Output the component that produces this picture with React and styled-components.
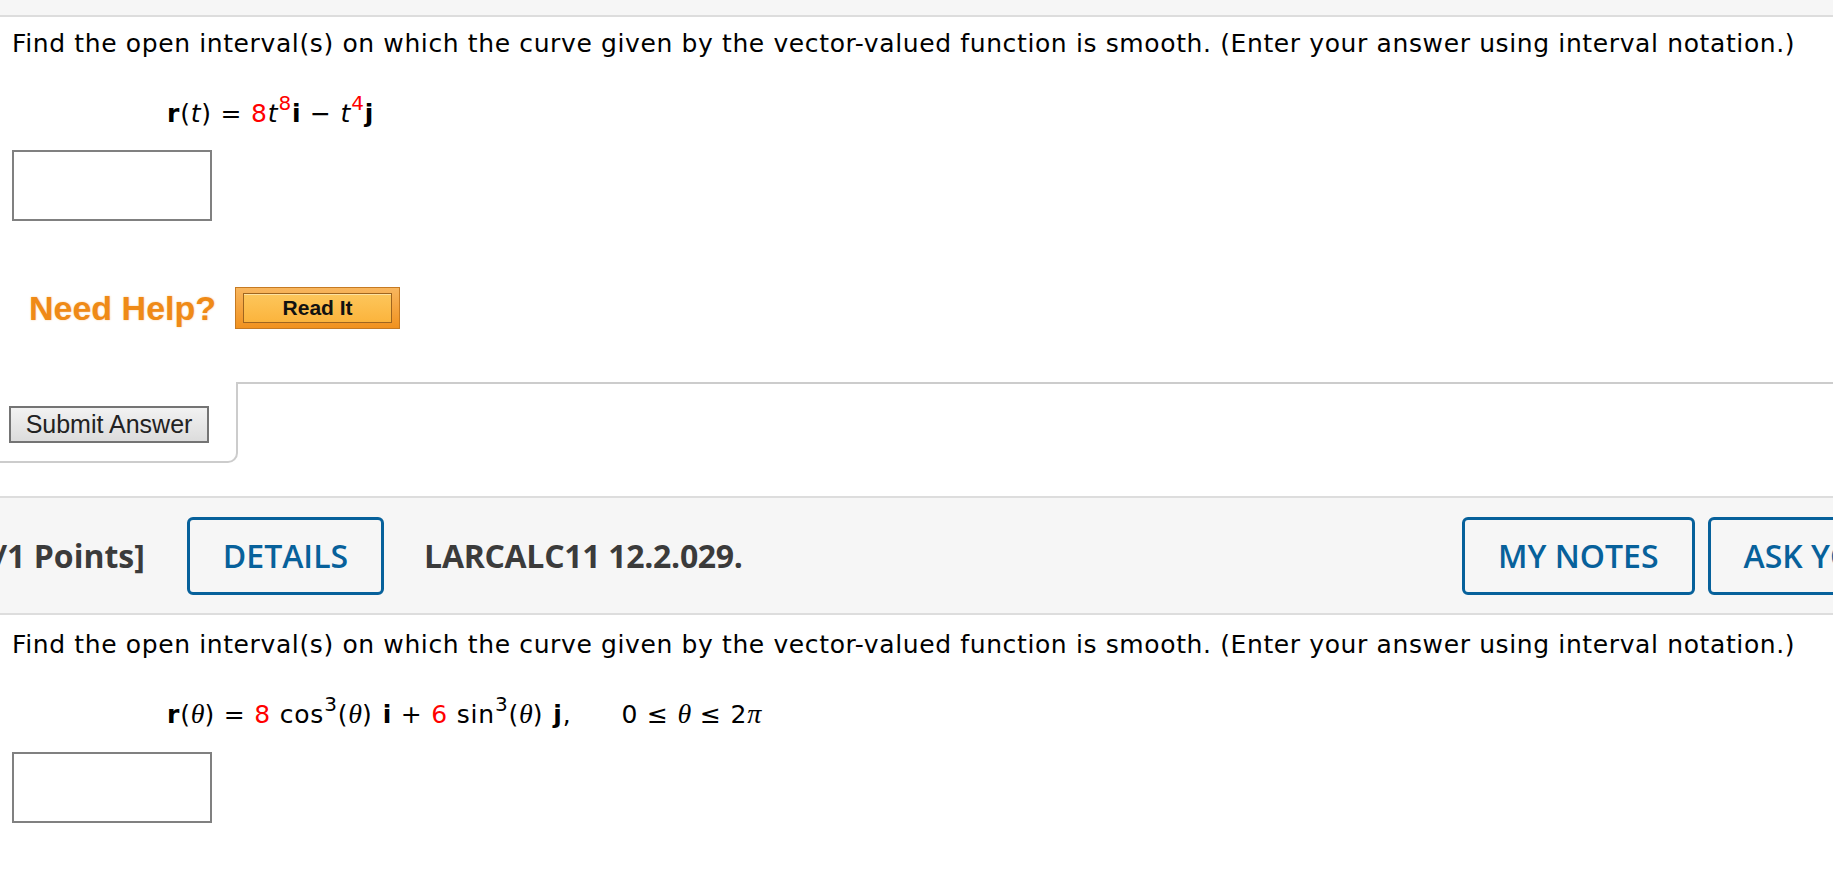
import React from "react";
import styled, { createGlobalStyle } from "styled-components";

const GlobalStyle = createGlobalStyle`
  html, body {
    margin: 0;
    padding: 0;
    background: #ffffff;
    overflow-x: hidden;
  }
  body {
    font-family: Verdana, "DejaVu Sans", sans-serif;
    color: #000;
  }
`;

const TopStrip = styled.div`
  height: 15px;
  background: #f6f6f6;
  border-bottom: 2px solid #dddddd;
`;

const Question = styled.section`
  display: flex;
  flex-direction: column;
  align-items: flex-start;
`;

const Prompt = styled.div`
  margin-top: ${(p) => p.$top}px;
  padding-left: 12px;
  font-family: Verdana, "DejaVu Sans", sans-serif;
  font-size: 25px;
  letter-spacing: 0.62px;
  line-height: 28px;
  white-space: nowrap;
`;

const Formula = styled.div`
  margin-top: ${(p) => p.$top}px;
  padding-left: 167px;
  font-family: Verdana, "DejaVu Sans", sans-serif;
  font-size: 25px;
  letter-spacing: 0.8px;
  line-height: 28px;
  white-space: nowrap;
`;

const Bold = styled.b`
  font-weight: 700;
`;

const Ital = styled.i`
  font-style: italic;
`;

const Greek = styled.i`
  font-family: "Liberation Serif", "Times New Roman", serif;
  font-style: italic;
  font-size: 28px;
  letter-spacing: 0;
`;

const Red = styled.span`
  color: #ff0000;
`;

const Sup = styled.span`
  font-size: 20px;
  line-height: 0;
  vertical-align: 12px;
  color: ${(p) => (p.$red ? "#ff0000" : "inherit")};
`;

const Gap = styled.span`
  display: inline-block;
  width: ${(p) => p.$w}px;
`;

const AnswerBox = styled.input`
  margin-top: ${(p) => p.$top}px;
  margin-left: 12px;
  width: 200px;
  height: 71px;
  box-sizing: border-box;
  border: 2px solid #808080;
  background: #fff;
  outline: none;
`;

const HelpRow = styled.div`
  display: flex;
  align-items: center;
  gap: 19px;
  margin-top: 66px;
  padding-left: 29px;
`;

const NeedHelp = styled.span`
  font-family: Arial, "Liberation Sans", sans-serif;
  font-weight: 700;
  font-size: 34px;
  color: #ef8a17;
  text-shadow: 0 0 2px rgba(239, 138, 23, 0.45);
`;

const ReadIt = styled.button`
  width: 165px;
  height: 42px;
  box-sizing: border-box;
  padding: 5px 7px;
  border: 1px solid #c67a22;
  background: linear-gradient(#f8b65e, #f1921f);
  cursor: pointer;
  display: flex;
`;

const ReadItFace = styled.span`
  flex: 1;
  display: flex;
  align-items: center;
  justify-content: center;
  border: 1px solid #9f651f;
  background: linear-gradient(#fdc65b, #fbb43d);
  box-shadow: inset 0 1px 0 #fde2a0;
  font-family: Arial, "Liberation Sans", sans-serif;
  font-weight: 700;
  font-size: 21px;
  color: #111;
`;

const SubmitArea = styled.div`
  display: flex;
  width: 100%;
  margin-top: 53px;
`;

const SubmitCell = styled.div`
  width: 238px;
  height: 81px;
  box-sizing: border-box;
  padding: 24px 0 0 9px;
  border-right: 2px solid #cccccc;
  border-bottom: 2px solid #cccccc;
  border-bottom-right-radius: 10px;
`;

const MessageCell = styled.div`
  flex: 1;
  border-top: 2px solid #cccccc;
`;

const SubmitButton = styled.button`
  width: 200px;
  height: 37px;
  box-sizing: border-box;
  padding: 0;
  border: 2px solid #747474;
  background: linear-gradient(#f2f2f2, #dcdcdc);
  font-family: Arial, "Liberation Sans", sans-serif;
  font-size: 25px;
  color: #222;
  cursor: pointer;
`;

const HeaderBar = styled.div`
  margin-top: 33px;
  height: 115px;
  display: flex;
  align-items: center;
  background: #f6f6f6;
  border-top: 2px solid #dddddd;
  border-bottom: 2px solid #dddddd;
  font-family: "Open Sans", sans-serif;
  white-space: nowrap;
`;

const Points = styled.span`
  margin-left: -35px;
  font-size: 32px;
  font-weight: 700;
  color: #3b3b3b;
`;

const Label = styled.span`
  margin-left: 40px;
  font-size: 32px;
  font-weight: 700;
  color: #3b3b3b;
  letter-spacing: -0.3px;
`;

const OutlineButton = styled.button`
  flex-shrink: 0;
  height: 78px;
  box-sizing: border-box;
  padding: 0 33px;
  margin-left: ${(p) => p.$left || 0}px;
  border: 3px solid #07619b;
  border-radius: 6px;
  background: transparent;
  font-family: "Open Sans", sans-serif;
  font-size: 32px;
  font-weight: 600;
  color: #07619b;
  cursor: pointer;
`;

const RightTools = styled.div`
  margin-left: auto;
  width: 371px;
  flex-shrink: 0;
  display: flex;
  gap: 13px;
`;

export default function App() {
  const prompt =
    "Find the open interval(s) on which the curve given by the vector-valued function is smooth. (Enter your answer using interval notation.)";
  return (
    <>
      <GlobalStyle />
      <TopStrip />
      <Question>
        <Prompt $top={13}>{prompt}</Prompt>
        <Formula $top={42}>
          <Bold>r</Bold>(<Ital>t</Ital>) = <Red>8</Red>
          <Ital>t</Ital>
          <Sup $red>8</Sup>
          <Bold>i</Bold> − <Ital>t</Ital>
          <Sup $red>4</Sup>
          <Bold>j</Bold>
        </Formula>
        <AnswerBox $top={22} />
        <HelpRow>
          <NeedHelp>Need Help?</NeedHelp>
          <ReadIt>
            <ReadItFace>Read It</ReadItFace>
          </ReadIt>
        </HelpRow>
        <SubmitArea>
          <SubmitCell>
            <SubmitButton>Submit Answer</SubmitButton>
          </SubmitCell>
          <MessageCell />
        </SubmitArea>
      </Question>

      <HeaderBar>
        <Points>[0/1 Points]</Points>
        <OutlineButton $left={42}>DETAILS</OutlineButton>
        <Label>LARCALC11 12.2.029.</Label>
        <RightTools>
          <OutlineButton>MY NOTES</OutlineButton>
          <OutlineButton>ASK YOUR TEACHER</OutlineButton>
        </RightTools>
      </HeaderBar>

      <Question>
        <Prompt $top={16}>{prompt}</Prompt>
        <Formula $top={41}>
          <Bold>r</Bold>(<Greek>θ</Greek>) = <Red>8</Red> cos<Sup>3</Sup>(
          <Greek>θ</Greek>)<Gap $w={10} />
          <Bold>i</Bold> + <Red>6</Red> sin<Sup>3</Sup>(<Greek>θ</Greek>)
          <Gap $w={10} />
          <Bold>j</Bold>,<Gap $w={50} />0 ≤ <Greek>θ</Greek> ≤ 2
          <Greek>π</Greek>
        </Formula>
        <AnswerBox $top={23} />
      </Question>
    </>
  );
}
